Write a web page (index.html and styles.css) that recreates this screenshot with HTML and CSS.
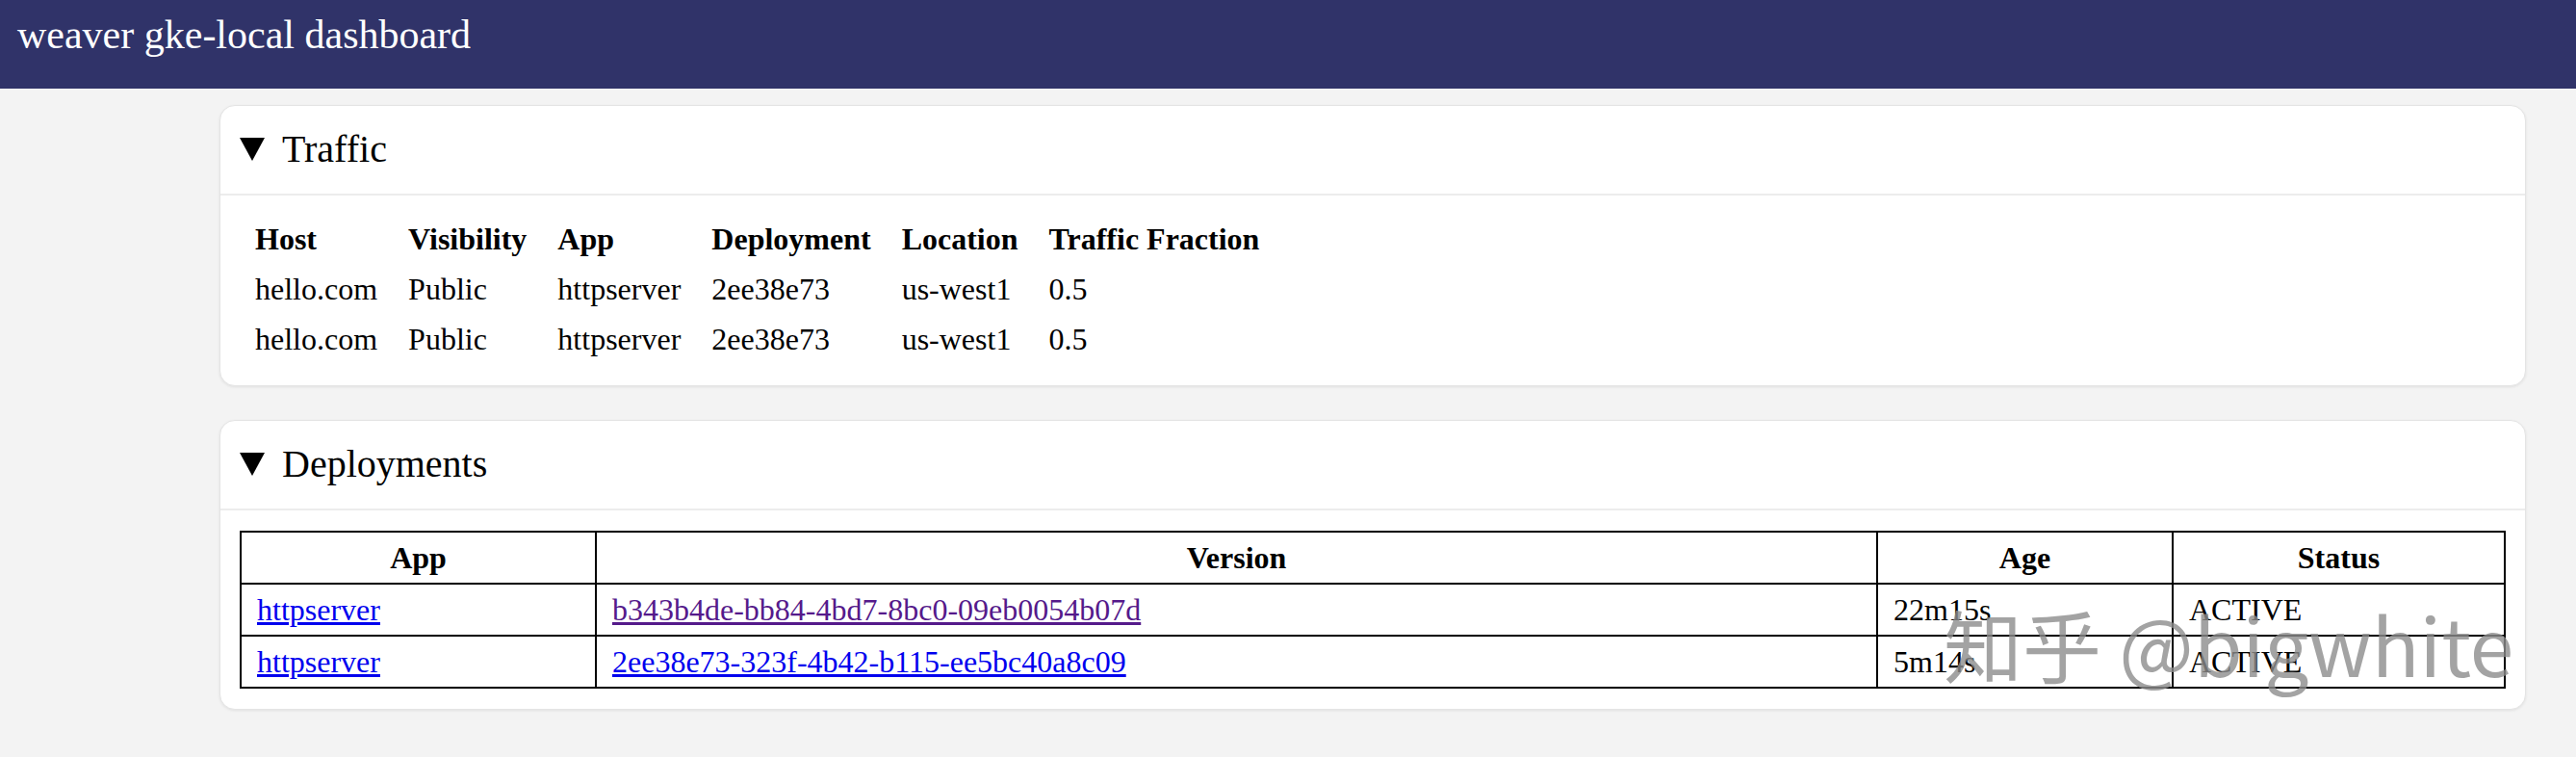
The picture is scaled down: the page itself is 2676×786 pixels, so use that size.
FILE: index.html
```html
<!DOCTYPE html>
<html lang="en">
<head>
<meta charset="utf-8">
<title>weaver gke-local dashboard</title>
<link rel="stylesheet" href="styles.css">
</head>
<body>
<header class="topbar">weaver gke-local dashboard</header>
<main class="content">
  <details class="card" open>
    <summary class="card-title">Traffic</summary>
    <div class="card-body">
      <table class="traffic">
        <thead>
          <tr><th>Host</th><th>Visibility</th><th>App</th><th>Deployment</th><th>Location</th><th>Traffic Fraction</th></tr>
        </thead>
        <tbody>
          <tr><td>hello.com</td><td>Public</td><td>httpserver</td><td>2ee38e73</td><td>us-west1</td><td>0.5</td></tr>
          <tr><td>hello.com</td><td>Public</td><td>httpserver</td><td>2ee38e73</td><td>us-west1</td><td>0.5</td></tr>
        </tbody>
      </table>
    </div>
  </details>

  <details class="card card-deploy" open>
    <summary class="card-title">Deployments</summary>
    <div class="card-body">
      <table class="deployments">
        <colgroup>
          <col class="col-app"><col class="col-version"><col class="col-age"><col class="col-status">
        </colgroup>
        <thead>
          <tr><th>App</th><th>Version</th><th>Age</th><th>Status</th></tr>
        </thead>
        <tbody>
          <tr>
            <td><a class="link" href="#app">httpserver</a></td>
            <td><a class="link visited" href="#b343">b343b4de-bb84-4bd7-8bc0-09eb0054b07d</a></td>
            <td>22m15s</td>
            <td>ACTIVE</td>
          </tr>
          <tr>
            <td><a class="link" href="#app">httpserver</a></td>
            <td><a class="link" href="#2ee3">2ee38e73-323f-4b42-b115-ee5bc40a8c09</a></td>
            <td>5m14s</td>
            <td>ACTIVE</td>
          </tr>
        </tbody>
      </table>
    </div>
    <div class="watermark">知乎 @bigwhite</div>
  </details>
</main>
</body>
</html>
```

FILE: styles.css
```css
html, body {
  margin: 0;
  padding: 0;
}

body {
  background: #f3f3f3;
  font-family: "Liberation Serif", "Times New Roman", serif;
  color: #000;
  width: 2676px;
  min-height: 786px;
}

.topbar {
  box-sizing: border-box;
  height: 92px;
  padding: 13px 18px 0;
  background: #303369;
  color: #fff;
  font-size: 42px;
  line-height: 46px;
}

.content {
  display: flex;
  flex-direction: column;
  gap: 35px;
  padding: 17px 52px 0 228px;
}

.card {
  position: relative;
  background: #fff;
  border: 1px solid #e4e4e4;
  border-radius: 16px;
  box-shadow: 0 1px 3px rgba(0, 0, 0, 0.08);
}

.card-title {
  display: block;
  list-style: none;
  padding: 22px 20px 23px;
  font-size: 40px;
  line-height: 46px;
  border-bottom: 2px solid #ececec;
  cursor: pointer;
}

.card-title::-webkit-details-marker {
  display: none;
}

.card-title::before {
  content: "";
  display: inline-block;
  width: 0;
  height: 0;
  border-left: 13px solid transparent;
  border-right: 13px solid transparent;
  border-top: 24px solid #000;
  margin-right: 18px;
  vertical-align: baseline;
  position: relative;
  top: -1px;
}

.card-body {
  padding: 19px 20px 22px;
}

.card-deploy .card-body {
  padding: 21px 20px 21px;
}

/* Traffic table */
.traffic {
  border-collapse: collapse;
  font-size: 32px;
  line-height: 36px;
}

.traffic th,
.traffic td {
  text-align: left;
  padding: 8px 16px;
  white-space: nowrap;
}

.traffic th {
  font-weight: bold;
}

/* Deployments table */
.deployments {
  width: 100%;
  table-layout: fixed;
  border-collapse: collapse;
  border: 2px solid #000;
  font-size: 32px;
  line-height: 36px;
}

.col-app { width: 369px; }
.col-version { width: 1331px; }
.col-age { width: 307px; }

.deployments th,
.deployments td {
  border: 2px solid #000;
  padding: 8px 16px;
  white-space: nowrap;
}

.deployments th {
  text-align: center;
  font-weight: bold;
}

.deployments td {
  text-align: left;
}

.link {
  color: #0000ee;
  text-decoration: underline;
}

.link.visited {
  color: #551a8b;
}

.watermark {
  position: absolute;
  left: 1790px;
  top: 190px;
  font-family: "Noto Sans CJK SC", "Noto Sans", sans-serif;
  font-size: 82px;
  line-height: 1;
  color: rgba(140, 140, 140, 0.8);
  white-space: nowrap;
  pointer-events: none;
}
```
